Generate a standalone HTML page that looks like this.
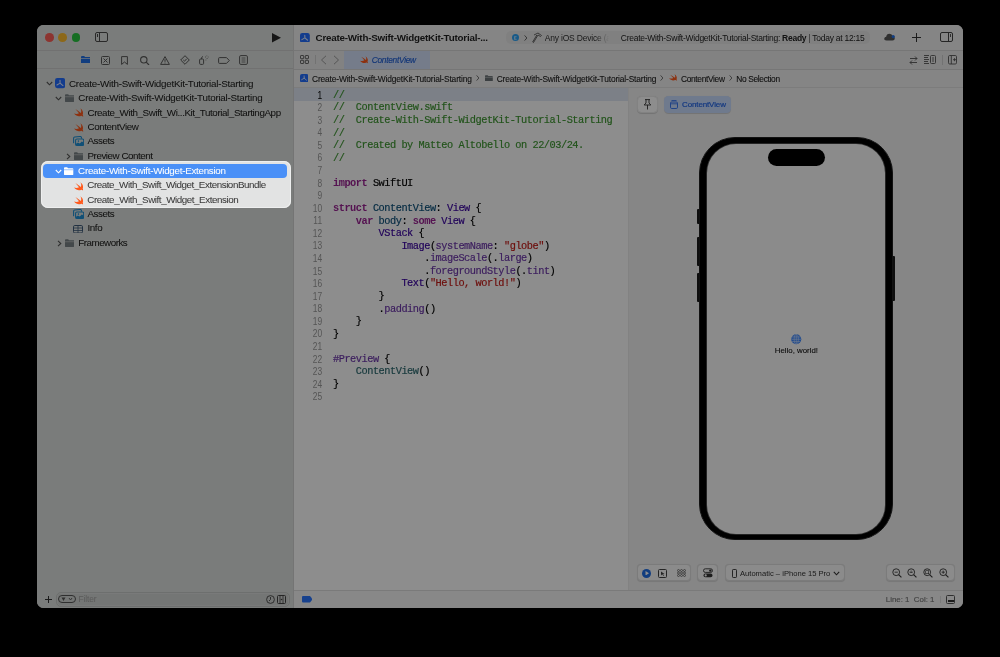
<!DOCTYPE html>
<html><head><meta charset="utf-8">
<style>
*{margin:0;padding:0;box-sizing:border-box}
html,body{width:1000px;height:657px;background:#000;overflow:hidden;font-family:"Liberation Sans",sans-serif;color:#222}
.a{position:absolute}
#win{position:absolute;left:37px;top:25px;width:926px;height:583px;border-radius:6.5px;overflow:hidden;background:#fff}
#pg{position:absolute;left:-37px;top:-25px;width:1000px;height:657px;will-change:transform}
#dim{position:absolute;left:0;top:0;width:1000px;height:657px;background:rgba(0,0,0,0.447)}
.t{position:absolute;white-space:nowrap;font-size:9px;line-height:12px}
.code{position:absolute;left:333px;font-family:"Liberation Mono",monospace;font-size:10.3px;letter-spacing:-0.48px;-webkit-text-stroke:0.18px;line-height:12.57px;white-space:pre;color:#000}
.ln{position:absolute;left:296px;width:26.1px;transform:scaleX(0.84);transform-origin:100% 50%;font-family:"Liberation Sans",sans-serif;font-size:10px;line-height:12.57px;text-align:right;color:#9a9a9a;white-space:pre}
.cm{color:#3d9630}.kw{color:#9b2393;font-weight:bold;-webkit-text-stroke:0}.ty{color:#3900a0}.st{color:#c41a16}.fn{color:#6c36a9}.cv{color:#0b4f79}.pu{color:#000}.pc{color:#2d6a70}
</style></head><body>
<div id="win"><div id="pg">

<div class="a" style="left:37px;top:25px;width:256px;height:583px;background:#dde1de"></div>
<div class="a" style="left:293px;top:25px;width:1px;height:583px;background:#d2d2d2"></div>
<div class="a" style="left:45.300000000000004px;top:33.0px;width:8.6px;height:8.6px;border-radius:50%;background:#fe5f57"></div>
<div class="a" style="left:58.400000000000006px;top:33.0px;width:8.6px;height:8.6px;border-radius:50%;background:#febc2e"></div>
<div class="a" style="left:71.5px;top:33.0px;width:8.6px;height:8.6px;border-radius:50%;background:#28c840"></div>
<div class="a" style="left:95px;top:32px;width:12.5px;height:10px;border:1.1px solid #4a4a4a;border-radius:2px"></div>
<div class="a" style="left:98.8px;top:32px;width:1.1px;height:10px;background:#4a4a4a"></div>
<div class="a" style="left:96.6px;top:34px;width:1px;height:2.5px;background:#4a4a4a"></div>
<svg class="a" style="left:272px;top:33px" width="9" height="9.5" viewBox="0 0 9 9.5"><path d="M0 0 L9 4.75 L0 9.5 Z" fill="#2a2a2a"/></svg>
<div class="a" style="left:37px;top:50px;width:256px;height:1px;background:#cdcdcd"></div>
<div class="a" style="left:37px;top:68px;width:256px;height:1px;background:#cdcdcd"></div>
<svg class="a" style="left:80.5px;top:55.5px" width="9.5" height="7.5" viewBox="0 0 9.5 7.5"><path d="M0 1 Q0 0 1 0 L3.2 0 L4 1 L8.5 1 Q9.5 1 9.5 2 L9.5 6.5 Q9.5 7.5 8.5 7.5 L1 7.5 Q0 7.5 0 6.5Z" fill="#1f6ee6"/><rect y="2" width="9.5" height="0.7" fill="#e0e1e0"/></svg>
<svg class="a" style="left:100.5px;top:55.5px" width="9" height="9" viewBox="0 0 9 9"><rect x="0.5" y="0.5" width="8" height="8" rx="1" stroke="#5a5a5a" fill="none"/><path d="M2.5 2.5 L6.5 6.5 M6.5 2.5 L2.5 6.5" stroke="#5a5a5a"/></svg>
<svg class="a" style="left:121px;top:55.5px" width="7" height="9" viewBox="0 0 7 9"><path d="M0.6 0.6 L6.4 0.6 L6.4 8.4 L3.5 6 L0.6 8.4 Z" stroke="#5a5a5a" fill="none" stroke-linejoin="round"/></svg>
<svg class="a" style="left:140px;top:55.5px" width="9.5" height="9.5" viewBox="0 0 9.5 9.5"><circle cx="3.8" cy="3.8" r="3.2" stroke="#5a5a5a" fill="none" stroke-width="1.1"/><path d="M6.2 6.2 L9 9" stroke="#5a5a5a" stroke-width="1.2"/></svg>
<svg class="a" style="left:159.5px;top:55.5px" width="10" height="9" viewBox="0 0 10 9"><path d="M5 0.6 L9.4 8.4 L0.6 8.4 Z" stroke="#5a5a5a" fill="none" stroke-linejoin="round"/><path d="M5 3.2 L5 5.8 M5 6.6 L5 7.4" stroke="#5a5a5a"/></svg>
<svg class="a" style="left:179.5px;top:55px" width="10" height="10" viewBox="0 0 10 10"><path d="M5 0.7 L9.3 5 L5 9.3 L0.7 5 Z" stroke="#5a5a5a" fill="none" stroke-linejoin="round"/><path d="M3.3 5 L4.5 6.2 L6.7 3.8" stroke="#5a5a5a" fill="none"/></svg>
<svg class="a" style="left:199px;top:55px" width="10" height="10" viewBox="0 0 10 10"><rect x="0.6" y="4" width="4" height="5.4" rx="1" stroke="#5a5a5a" fill="none"/><path d="M2.6 4 L2.6 2.5 L4 1.5" stroke="#5a5a5a" fill="none"/><path d="M6 2 L7 2 M7.5 0.8 L8.2 0.8 M7.6 3.5 L8.6 3.5 M8.8 2 L9.6 2 M6.5 5 L7.3 5" stroke="#5a5a5a" stroke-width="0.7"/></svg>
<svg class="a" style="left:217.5px;top:56.5px" width="12" height="7" viewBox="0 0 12 7"><path d="M1.5 0.6 L8.5 0.6 L11.3 3.5 L8.5 6.4 L1.5 6.4 Q0.6 6.4 0.6 5.5 L0.6 1.5 Q0.6 0.6 1.5 0.6Z" stroke="#5a5a5a" fill="none"/></svg>
<svg class="a" style="left:239px;top:55px" width="9" height="10" viewBox="0 0 9 10"><rect x="0.6" y="0.6" width="7.8" height="8.8" rx="1.2" stroke="#5a5a5a" fill="none"/><path d="M2.5 3 L6.5 3 M2.5 5 L6.5 5 M2.5 7 L6.5 7" stroke="#5a5a5a" stroke-width="0.8"/></svg>
<svg class="a" style="left:46px;top:81.4px" width="7" height="5" viewBox="0 0 7 5"><path d="M0.8 1 L3.5 3.8 L6.2 1" stroke="#555" stroke-width="1.1" fill="none"/></svg>
<svg class="a" style="left:55px;top:78.4px" width="10.2" height="10.2" viewBox="0 0 10 10"><rect x="0" y="0" width="10" height="10" rx="2.3" fill="#246dff"/><path d="M4.9 2.3 L5 5 M5 5 L1.9 6.8 M5 5 L7.8 7.4" stroke="#dce8ff" stroke-width="1.05" stroke-linecap="round" fill="none"/></svg>
<div class="t" style="left:69px;top:77.50px;font-size:9.8px;letter-spacing:-0.23px;-webkit-text-stroke:0.05px;">Create-With-Swift-WidgetKit-Tutorial-Starting</div>
<svg class="a" style="left:55px;top:95.9px" width="7" height="5" viewBox="0 0 7 5"><path d="M0.8 1 L3.5 3.8 L6.2 1" stroke="#555" stroke-width="1.1" fill="none"/></svg>
<svg class="a" style="left:64.5px;top:94.0px" width="9.3" height="8" viewBox="0 0 10 8.5" preserveAspectRatio="none"><path d="M0 1.2 Q0 0.3 0.9 0.3 L3.4 0.3 L4.3 1.3 L9.1 1.3 Q10 1.3 10 2.2 L10 7.6 Q10 8.5 9.1 8.5 L0.9 8.5 Q0 8.5 0 7.6 Z" fill="#7a8286"/><rect x="0" y="2.5" width="10" height="0.9" fill="#e0e1e0" fill-opacity="0.6"/></svg>
<div class="t" style="left:78.3px;top:92.00px;font-size:9.8px;letter-spacing:-0.23px;-webkit-text-stroke:0.05px;">Create-With-Swift-WidgetKit-Tutorial-Starting</div>
<svg class="a" style="left:74px;top:108.4px" width="9.5" height="9" preserveAspectRatio="none" viewBox="0 0 9.5 9"><path d="M0 5.6 C2.2 8.4 5.2 8.9 7.2 7.7 C8 7.9 8.6 8.2 9.2 8.8 C9.3 8 9.1 7.3 8.7 6.8 C9.6 4.6 8.9 2.1 6.4 0.2 C7.3 1.9 7.5 3.6 6.9 4.9 C5.3 3.5 3.4 2 1.4 0.9 C2.8 2.4 4 3.8 5 5.2 C3.6 6.1 1.8 6.1 0 5.6Z" fill="#fe5a1e"/></svg>
<div class="t" style="left:87.5px;top:106.50px;font-size:9.8px;letter-spacing:-0.4px;-webkit-text-stroke:0.05px;">Create_With_Swift_Wi...Kit_Tutorial_StartingApp</div>
<svg class="a" style="left:74px;top:122.9px" width="9.5" height="9" preserveAspectRatio="none" viewBox="0 0 9.5 9"><path d="M0 5.6 C2.2 8.4 5.2 8.9 7.2 7.7 C8 7.9 8.6 8.2 9.2 8.8 C9.3 8 9.1 7.3 8.7 6.8 C9.6 4.6 8.9 2.1 6.4 0.2 C7.3 1.9 7.5 3.6 6.9 4.9 C5.3 3.5 3.4 2 1.4 0.9 C2.8 2.4 4 3.8 5 5.2 C3.6 6.1 1.8 6.1 0 5.6Z" fill="#fe5a1e"/></svg>
<div class="t" style="left:87.5px;top:121.00px;font-size:9.8px;letter-spacing:-0.41px;-webkit-text-stroke:0.05px;">ContentView</div>
<svg class="a" style="left:72.8px;top:136.3px" width="11.3" height="10" viewBox="0 0 11.3 10"><path d="M0.6 7.2 L0.6 2.2 Q0.6 1.1 1.7 1 L7.2 0.5 Q8.2 0.4 8.4 1.4 L8.6 2.6" stroke="#1d8fd6" stroke-width="1.1" fill="none"/><rect x="2.6" y="3" width="8.1" height="6.4" rx="1.3" stroke="#1d8fd6" stroke-width="1.1" fill="none"/><path d="M2.6 8 L5 6.6 L6.8 7.4 L8.8 5.6 L10.7 6.6 L10.7 9.4 L2.6 9.4Z" fill="#1d8fd6"/><circle cx="5.4" cy="5.1" r="0.8" fill="#1d8fd6"/></svg>
<div class="t" style="left:87.5px;top:135.40px;font-size:9.8px;letter-spacing:-0.45px;-webkit-text-stroke:0.05px;">Assets</div>
<svg class="a" style="left:66px;top:152.8px" width="5" height="7" viewBox="0 0 5 7"><path d="M1 0.8 L3.8 3.5 L1 6.2" stroke="#555" stroke-width="1.1" fill="none"/></svg>
<svg class="a" style="left:74px;top:151.9px" width="9.3" height="8" viewBox="0 0 10 8.5" preserveAspectRatio="none"><path d="M0 1.2 Q0 0.3 0.9 0.3 L3.4 0.3 L4.3 1.3 L9.1 1.3 Q10 1.3 10 2.2 L10 7.6 Q10 8.5 9.1 8.5 L0.9 8.5 Q0 8.5 0 7.6 Z" fill="#7a8286"/><rect x="0" y="2.5" width="10" height="0.9" fill="#e0e1e0" fill-opacity="0.6"/></svg>
<div class="t" style="left:87.5px;top:149.90px;font-size:9.8px;letter-spacing:-0.45px;-webkit-text-stroke:0.05px;">Preview Content</div>
<svg class="a" style="left:72.8px;top:208.8px" width="11.3" height="10" viewBox="0 0 11.3 10"><path d="M0.6 7.2 L0.6 2.2 Q0.6 1.1 1.7 1 L7.2 0.5 Q8.2 0.4 8.4 1.4 L8.6 2.6" stroke="#1d8fd6" stroke-width="1.1" fill="none"/><rect x="2.6" y="3" width="8.1" height="6.4" rx="1.3" stroke="#1d8fd6" stroke-width="1.1" fill="none"/><path d="M2.6 8 L5 6.6 L6.8 7.4 L8.8 5.6 L10.7 6.6 L10.7 9.4 L2.6 9.4Z" fill="#1d8fd6"/><circle cx="5.4" cy="5.1" r="0.8" fill="#1d8fd6"/></svg>
<div class="t" style="left:87.5px;top:207.90px;font-size:9.8px;letter-spacing:-0.45px;-webkit-text-stroke:0.05px;">Assets</div>
<svg class="a" style="left:73.2px;top:224.60000000000002px" width="10" height="8.5" viewBox="0 0 10 8.5"><rect x="0.5" y="0.5" width="9" height="7.5" rx="1.3" stroke="#3f5a78" fill="none"/><path d="M5 0.5 L5 8 M0.5 3 L9.5 3 M0.5 5.5 L9.5 5.5" stroke="#3f5a78" stroke-width="0.8"/></svg>
<div class="t" style="left:87.5px;top:222.40px;font-size:9.8px;letter-spacing:-0.4px;-webkit-text-stroke:0.05px;">Info</div>
<svg class="a" style="left:56.5px;top:239.8px" width="5" height="7" viewBox="0 0 5 7"><path d="M1 0.8 L3.8 3.5 L1 6.2" stroke="#555" stroke-width="1.1" fill="none"/></svg>
<svg class="a" style="left:64.5px;top:238.9px" width="9.3" height="8" viewBox="0 0 10 8.5" preserveAspectRatio="none"><path d="M0 1.2 Q0 0.3 0.9 0.3 L3.4 0.3 L4.3 1.3 L9.1 1.3 Q10 1.3 10 2.2 L10 7.6 Q10 8.5 9.1 8.5 L0.9 8.5 Q0 8.5 0 7.6 Z" fill="#7a8286"/><rect x="0" y="2.5" width="10" height="0.9" fill="#e0e1e0" fill-opacity="0.6"/></svg>
<div class="t" style="left:78.3px;top:236.90px;font-size:9.8px;letter-spacing:-0.5px;-webkit-text-stroke:0.05px;">Frameworks</div>
<div class="a" style="left:44.9px;top:598.7px;width:7.1px;height:1.1px;background:#333"></div>
<div class="a" style="left:47.9px;top:595.7px;width:1.1px;height:7.1px;background:#333"></div>
<div class="a" style="left:55.5px;top:592px;width:234px;height:14.5px;border-radius:5px;background:#d2d5d3;border:1px solid #c6c9c7;box-shadow:inset 0 0 0 0.6px #e4e6e5"></div>
<div class="a" style="left:58px;top:594.5px;width:18px;height:8.5px;border-radius:4.5px;border:1.1px solid #555"></div>
<svg class="a" style="left:61px;top:596.5px" width="12" height="5" viewBox="0 0 12 5"><path d="M0.5 0.5 L4.5 0.5 L2.5 4 Z" fill="#555"/><path d="M8 1 L9.5 3 L11 1" stroke="#555" fill="none" stroke-width="0.9"/></svg>
<div class="t" style="left:78.5px;top:593.3px;color:#a3a3a3;font-size:8.4px;letter-spacing:-0.1px">Filter</div>
<svg class="a" style="left:266px;top:595px" width="9" height="9" viewBox="0 0 9 9"><circle cx="4.5" cy="4.5" r="3.9" stroke="#444" fill="none" stroke-width="0.9"/><path d="M4.5 2 L4.5 4.5 L3 6" stroke="#444" fill="none" stroke-width="0.9"/></svg>
<svg class="a" style="left:277px;top:595px" width="9" height="9" viewBox="0 0 9 9"><rect x="0.5" y="0.5" width="8" height="8" rx="1" stroke="#444" fill="none"/><path d="M3 1 L3 8 M6 1 L6 8" stroke="#444" stroke-width="0.8"/><circle cx="4.5" cy="4.5" r="0.8" fill="#444"/></svg>

<div class="a" style="left:294px;top:25px;width:669px;height:25px;background:#f1f1f1"></div>
<div class="a" style="left:294px;top:50px;width:669px;height:1px;background:#d6d6d6"></div>
<div class="a" style="left:294px;top:51px;width:669px;height:17.5px;background:#ececec"></div>
<div class="a" style="left:344px;top:51px;width:85.5px;height:17.5px;background:#d3e1f9"></div>
<div class="a" style="left:294px;top:68.5px;width:669px;height:1px;background:#d6d6d6"></div>
<div class="a" style="left:294px;top:69.5px;width:669px;height:17.5px;background:#f1f1f1"></div>
<div class="a" style="left:294px;top:87px;width:669px;height:1px;background:#e0e0e0"></div>
<div class="a" style="left:294px;top:88.3px;width:334.5px;height:12.4px;background:#e0e8f4"></div>
<div class="a" style="left:628.5px;top:88px;width:334.5px;height:502px;background:#f3f3f3"></div>
<div class="a" style="left:628px;top:88px;width:1px;height:502px;background:#ececec"></div>
<div class="a" style="left:294px;top:590px;width:669px;height:1px;background:#dcdcdc"></div>
<div class="a" style="left:294px;top:591px;width:669px;height:17px;background:#f6f6f6"></div>

<svg class="a" style="left:300.2px;top:32.5px" width="9.8" height="9.8" viewBox="0 0 10 10"><rect x="0" y="0" width="10" height="10" rx="2.3" fill="#246dff"/><path d="M4.9 2.3 L5 5 M5 5 L1.9 6.8 M5 5 L7.8 7.4" stroke="#dce8ff" stroke-width="1.05" stroke-linecap="round" fill="none"/></svg>
<div class="t" style="left:315.5px;top:31.6px;font-weight:bold;font-size:9.8px;letter-spacing:-0.2px;color:#222">Create-With-Swift-WidgetKit-Tutorial-...</div>
<div class="a" style="left:506.4px;top:30.6px;width:363.3px;height:13.6px;border-radius:5px;background:#e8e8e8"></div>
<div class="a" style="left:511.8px;top:34px;width:7.2px;height:7.2px;border-radius:50%;background:#2da3f6"></div>
<svg class="a" style="left:513.9px;top:35.6px" width="3" height="4" viewBox="0 0 3 4"><path d="M2.6 0.4 L0.5 0.4 L0.5 3.6 L2.6 3.6 M0.5 2 L2.2 2" stroke="#cfeaff" stroke-width="0.7" fill="none"/></svg>
<svg class="a" style="left:523.8px;top:34.5px" width="3.5" height="6" viewBox="0 0 3.5 6"><path d="M0.6 0.4 L2.9 3 L0.6 5.6" stroke="#444" stroke-width="0.8" fill="none"/></svg>
<svg class="a" style="left:532px;top:31.5px" width="10" height="11" viewBox="0 0 10 11"><path d="M2 3 L6 1 L9.5 3.5 L8.5 4.5 L6 3 L1.5 10.5 L0.7 10 L4.8 3" stroke="#444" fill="none" stroke-width="0.8"/></svg>
<div class="t" style="left:544.8px;top:31.65px;color:#333;width:64px;overflow:hidden;font-size:8.5px;letter-spacing:-0.2px;-webkit-mask-image:linear-gradient(90deg,#000 80%,transparent)">Any iOS Device (arm64)</div>
<div class="t" style="left:620.8px;top:31.65px;color:#222;font-size:8.5px;letter-spacing:-0.26px">Create-With-Swift-WidgetKit-Tutorial-Starting: <b>Ready</b> <span style="color:#555">|</span> Today at 12:15</div>
<svg class="a" style="left:883.5px;top:33px" width="12" height="8" viewBox="0 0 12 8"><path d="M2.5 7.5 Q0 7.5 0.3 5.3 Q0.6 3.8 2.2 3.8 Q2.6 1 5.3 0.8 Q7.6 0.8 8.6 2.8 Q10.8 3 10.8 5.2 Q10.8 7.5 8.6 7.5Z" fill="#555"/><circle cx="9" cy="3.8" r="2" fill="#fff" fill-opacity="0"/><circle cx="9.2" cy="3.6" r="1.6" fill="#1f6ee6"/></svg>
<div class="a" style="left:911.5px;top:36.8px;width:9px;height:1.1px;background:#333"></div>
<div class="a" style="left:915.5px;top:32.8px;width:1.1px;height:9px;background:#333"></div>
<div class="a" style="left:940.3px;top:32px;width:13px;height:10px;border:1.1px solid #444;border-radius:2px"></div>
<div class="a" style="left:948px;top:32px;width:1px;height:10px;background:#444"></div>
<div class="a" style="left:950.2px;top:34.3px;width:0.9px;height:2.8px;background:#555"></div>
<svg class="a" style="left:300px;top:55px" width="9" height="9" viewBox="0 0 9 9"><rect x="0.5" y="0.5" width="3.2" height="3.2" rx="0.6" stroke="#555" fill="none" stroke-width="0.9"/><rect x="5.3" y="0.5" width="3.2" height="3.2" rx="0.6" stroke="#555" fill="none" stroke-width="0.9"/><rect x="0.5" y="5.3" width="3.2" height="3.2" rx="0.6" stroke="#555" fill="none" stroke-width="0.9"/><rect x="5.3" y="5.3" width="3.2" height="3.2" rx="0.6" stroke="#555" fill="none" stroke-width="0.9"/></svg>
<div class="a" style="left:314.5px;top:55px;width:1px;height:9px;background:#cfcfcf"></div>
<svg class="a" style="left:319.5px;top:54.5px" width="7" height="10" viewBox="0 0 7 10"><path d="M6 0.8 L1.5 5 L6 9.2" stroke="#999" fill="none"/></svg>
<svg class="a" style="left:333px;top:54.5px" width="7" height="10" viewBox="0 0 7 10"><path d="M1 0.8 L5.5 5 L1 9.2" stroke="#999" fill="none"/></svg>
<svg class="a" style="left:359.8px;top:56px" width="8.2" height="7.5" preserveAspectRatio="none" viewBox="0 0 9.5 9"><path d="M0 5.6 C2.2 8.4 5.2 8.9 7.2 7.7 C8 7.9 8.6 8.2 9.2 8.8 C9.3 8 9.1 7.3 8.7 6.8 C9.6 4.6 8.9 2.1 6.4 0.2 C7.3 1.9 7.5 3.6 6.9 4.9 C5.3 3.5 3.4 2 1.4 0.9 C2.8 2.4 4 3.8 5 5.2 C3.6 6.1 1.8 6.1 0 5.6Z" fill="#fe5a1e"/></svg>
<div class="t" style="left:371.7px;top:53.7px;font-style:italic;color:#1f5ed6;font-size:8.3px;letter-spacing:-0.25px;-webkit-text-stroke:0.15px">ContentView</div>
<svg class="a" style="left:908.5px;top:55.5px" width="9" height="9" viewBox="0 0 9 9"><path d="M1 2.5 L8 2.5 M6 0.5 L8 2.5 L6 4.5 M8 6.5 L1 6.5 M3 4.5 L1 6.5 L3 8.5" stroke="#555" fill="none" stroke-width="0.9"/></svg>
<svg class="a" style="left:924px;top:55px" width="12" height="9" viewBox="0 0 12 9"><path d="M0 0.5 L5 0.5 M0 2.5 L4 2.5 M0 4.5 L5 4.5 M0 6.5 L4 6.5 M0 8.5 L5 8.5" stroke="#555" stroke-width="0.9"/><rect x="6.5" y="0.5" width="5" height="8" rx="1" stroke="#555" fill="none" stroke-width="0.9"/><path d="M9 2 L9 7" stroke="#555" stroke-width="0.9"/></svg>
<div class="a" style="left:942px;top:55px;width:1px;height:10px;background:#cfcfcf"></div>
<svg class="a" style="left:948.3px;top:55px" width="9" height="9.5" viewBox="0 0 9 9.5"><rect x="0.5" y="0.5" width="8" height="8.5" rx="1.2" stroke="#555" fill="none" stroke-width="0.9"/><path d="M3.3 0.5 L3.3 9 M5 4.7 L8 4.7 M6.5 3.2 L6.5 6.2" stroke="#555" stroke-width="0.9"/></svg>
<svg class="a" style="left:299.8px;top:74px" width="8.4" height="8.4" viewBox="0 0 10 10"><rect x="0" y="0" width="10" height="10" rx="2.3" fill="#246dff"/><path d="M4.9 2.3 L5 5 M5 5 L1.9 6.8 M5 5 L7.8 7.4" stroke="#dce8ff" stroke-width="1.05" stroke-linecap="round" fill="none"/></svg>
<div class="t" style="left:312px;top:72.5px;color:#222;font-size:8.4px;letter-spacing:-0.147px;-webkit-text-stroke:0.1px">Create-With-Swift-WidgetKit-Tutorial-Starting</div>
<svg class="a" style="left:476px;top:75.4px" width="3.5" height="6" viewBox="0 0 3.5 6"><path d="M0.6 0.4 L2.9 3 L0.6 5.6" stroke="#555" stroke-width="0.8" fill="none"/></svg>
<svg class="a" style="left:484.8px;top:74.6px" width="7.8" height="6.4" viewBox="0 0 10 8.5" preserveAspectRatio="none"><path d="M0 1.2 Q0 0.3 0.9 0.3 L3.4 0.3 L4.3 1.3 L9.1 1.3 Q10 1.3 10 2.2 L10 7.6 Q10 8.5 9.1 8.5 L0.9 8.5 Q0 8.5 0 7.6 Z" fill="#6c7376"/><rect x="0" y="2.5" width="10" height="0.9" fill="#f3f3f3" fill-opacity="0.6"/></svg>
<div class="t" style="left:496.7px;top:72.5px;color:#222;font-size:8.4px;letter-spacing:-0.147px;-webkit-text-stroke:0.1px">Create-With-Swift-WidgetKit-Tutorial-Starting</div>
<svg class="a" style="left:660px;top:75.4px" width="3.5" height="6" viewBox="0 0 3.5 6"><path d="M0.6 0.4 L2.9 3 L0.6 5.6" stroke="#555" stroke-width="0.8" fill="none"/></svg>
<svg class="a" style="left:669px;top:74.4px" width="8.2" height="7" preserveAspectRatio="none" viewBox="0 0 9.5 9"><path d="M0 5.6 C2.2 8.4 5.2 8.9 7.2 7.7 C8 7.9 8.6 8.2 9.2 8.8 C9.3 8 9.1 7.3 8.7 6.8 C9.6 4.6 8.9 2.1 6.4 0.2 C7.3 1.9 7.5 3.6 6.9 4.9 C5.3 3.5 3.4 2 1.4 0.9 C2.8 2.4 4 3.8 5 5.2 C3.6 6.1 1.8 6.1 0 5.6Z" fill="#fe5a1e"/></svg>
<div class="t" style="left:681px;top:72.5px;color:#222;font-size:8.4px;letter-spacing:-0.34px;-webkit-text-stroke:0.1px">ContentView</div>
<svg class="a" style="left:728.5px;top:75.4px" width="3.5" height="6" viewBox="0 0 3.5 6"><path d="M0.6 0.4 L2.9 3 L0.6 5.6" stroke="#555" stroke-width="0.8" fill="none"/></svg>
<div class="t" style="left:736.2px;top:72.5px;color:#222;font-size:8.4px;letter-spacing:-0.33px;-webkit-text-stroke:0.1px">No Selection</div>
<div class="ln" style="top:89.61px;color:#000">1</div>
<div class="code" style="top:88.81px"><span class="cm">//</span></div>
<div class="ln" style="top:102.18px;color:#9a9a9a">2</div>
<div class="code" style="top:101.38px"><span class="cm">//  ContentView.swift</span></div>
<div class="ln" style="top:114.75px;color:#9a9a9a">3</div>
<div class="code" style="top:113.95px"><span class="cm">//  Create-With-Swift-WidgetKit-Tutorial-Starting</span></div>
<div class="ln" style="top:127.33px;color:#9a9a9a">4</div>
<div class="code" style="top:126.53px"><span class="cm">//</span></div>
<div class="ln" style="top:139.90px;color:#9a9a9a">5</div>
<div class="code" style="top:139.09px"><span class="cm">//  Created by Matteo Altobello on 22/03/24.</span></div>
<div class="ln" style="top:152.47px;color:#9a9a9a">6</div>
<div class="code" style="top:151.66px"><span class="cm">//</span></div>
<div class="ln" style="top:165.04px;color:#9a9a9a">7</div>
<div class="code" style="top:164.24px"></div>
<div class="ln" style="top:177.61px;color:#9a9a9a">8</div>
<div class="code" style="top:176.81px"><span class="kw">import</span> SwiftUI</div>
<div class="ln" style="top:190.18px;color:#9a9a9a">9</div>
<div class="code" style="top:189.38px"></div>
<div class="ln" style="top:202.75px;color:#9a9a9a">10</div>
<div class="code" style="top:201.94px"><span class="kw">struct</span> <span class="cv">ContentView</span>: <span class="ty">View</span> {</div>
<div class="ln" style="top:215.31px;color:#9a9a9a">11</div>
<div class="code" style="top:214.51px">    <span class="kw">var</span> <span class="cv">body</span>: <span class="kw">some</span> <span class="ty">View</span> {</div>
<div class="ln" style="top:227.89px;color:#9a9a9a">12</div>
<div class="code" style="top:227.09px">        <span class="ty">VStack</span> {</div>
<div class="ln" style="top:240.46px;color:#9a9a9a">13</div>
<div class="code" style="top:239.66px">            <span class="ty">Image</span>(<span class="fn">systemName</span>: <span class="st">"globe"</span>)</div>
<div class="ln" style="top:253.03px;color:#9a9a9a">14</div>
<div class="code" style="top:252.22px">                .<span class="fn">imageScale</span>(.<span class="fn">large</span>)</div>
<div class="ln" style="top:265.60px;color:#9a9a9a">15</div>
<div class="code" style="top:264.80px">                .<span class="fn">foregroundStyle</span>(.<span class="fn">tint</span>)</div>
<div class="ln" style="top:278.17px;color:#9a9a9a">16</div>
<div class="code" style="top:277.37px">            <span class="ty">Text</span>(<span class="st">"Hello, world!"</span>)</div>
<div class="ln" style="top:290.74px;color:#9a9a9a">17</div>
<div class="code" style="top:289.94px">        }</div>
<div class="ln" style="top:303.31px;color:#9a9a9a">18</div>
<div class="code" style="top:302.50px">        .<span class="fn">padding</span>()</div>
<div class="ln" style="top:315.88px;color:#9a9a9a">19</div>
<div class="code" style="top:315.07px">    }</div>
<div class="ln" style="top:328.44px;color:#9a9a9a">20</div>
<div class="code" style="top:327.64px">}</div>
<div class="ln" style="top:341.02px;color:#9a9a9a">21</div>
<div class="code" style="top:340.22px"></div>
<div class="ln" style="top:353.59px;color:#9a9a9a">22</div>
<div class="code" style="top:352.79px"><span class="fn">#Preview</span> {</div>
<div class="ln" style="top:366.16px;color:#9a9a9a">23</div>
<div class="code" style="top:365.36px">    <span class="pc">ContentView</span>()</div>
<div class="ln" style="top:378.73px;color:#9a9a9a">24</div>
<div class="code" style="top:377.93px">}</div>
<div class="ln" style="top:391.30px;color:#9a9a9a">25</div>
<div class="code" style="top:390.50px"></div>
<div class="a" style="left:637px;top:96px;width:21px;height:17px;border-radius:4.5px;background:#fff;border:1px solid #ebebeb;box-shadow:0 0.5px 1px rgba(0,0,0,0.15)"></div>
<svg class="a" style="left:643px;top:99px" width="9" height="11" viewBox="0 0 9 11"><path d="M2 0.6 L7 0.6 M3 0.6 L3 4 L1.2 6 L7.8 6 L6 4 L6 0.6 M4.5 6 L4.5 10.5" stroke="#333" fill="none" stroke-width="0.9"/></svg>
<div class="a" style="left:664.3px;top:96px;width:67px;height:17px;border-radius:4.5px;background:#c9dcff;box-shadow:0 0.5px 1px rgba(0,0,0,0.15)"></div>
<svg class="a" style="left:670px;top:99.5px" width="8" height="9" viewBox="0 0 8 9"><rect x="0.5" y="2" width="7" height="6.5" rx="1.2" stroke="#2a6df0" fill="none" stroke-width="0.9"/><path d="M1.5 0.5 L6.5 0.5 M0.5 3.8 L7.5 3.8" stroke="#2a6df0" stroke-width="0.8"/></svg>
<div class="t" style="left:682px;top:98.8px;color:#2467e8;font-size:8px;letter-spacing:-0.13px;-webkit-text-stroke:0.2px">ContentView</div>
<div class="a" style="left:696.8px;top:209px;width:3px;height:15px;background:#1a1a1a;border-radius:1px"></div>
<div class="a" style="left:696.5px;top:237px;width:3px;height:28.5px;background:#1a1a1a;border-radius:1px"></div>
<div class="a" style="left:696.5px;top:273.4px;width:3px;height:28.5px;background:#1a1a1a;border-radius:1px"></div>
<div class="a" style="left:892px;top:256px;width:3px;height:45px;background:#1a1a1a;border-radius:1px"></div>
<div class="a" style="left:699.4px;top:136.8px;width:193.6px;height:402.8px;border-radius:36px;background:#000;border:1.5px solid #222"></div>
<div class="a" style="left:706.7px;top:144px;width:178.7px;height:389.7px;border-radius:29px;background:#fcfcfc;box-shadow:0 0 0 0.8px #555"></div>
<div class="a" style="left:767.6px;top:149px;width:57.2px;height:16.5px;border-radius:8.5px;background:#000"></div>
<svg class="a" style="left:791px;top:334px" width="10.5" height="10.5" viewBox="0 0 10 10"><circle cx="5" cy="5" r="4.8" fill="#3a86ff"/><g stroke="#cfe0ff" stroke-width="0.6" fill="none"><ellipse cx="5" cy="5" rx="2" ry="4.6"/><path d="M0.3 5 L9.7 5 M1 2.8 L9 2.8 M1 7.2 L9 7.2 M5 0.3 L5 9.7"/></g></svg>
<div class="t" style="left:774.8px;top:344.6px;color:#111;font-size:7.85px;-webkit-text-stroke:0.1px">Hello, world!</div>
<div class="a" style="left:637px;top:564.4px;width:53.60000000000002px;height:17px;border-radius:4px;background:#fbfbfb;border:1px solid #dedede;box-shadow:0 0.5px 1px rgba(0,0,0,0.12)"></div>
<div class="a" style="left:697px;top:564.4px;width:21.299999999999955px;height:17px;border-radius:4px;background:#fbfbfb;border:1px solid #dedede;box-shadow:0 0.5px 1px rgba(0,0,0,0.12)"></div>
<div class="a" style="left:724.7px;top:564.4px;width:120.69999999999993px;height:17px;border-radius:4px;background:#fbfbfb;border:1px solid #dedede;box-shadow:0 0.5px 1px rgba(0,0,0,0.12)"></div>
<div class="a" style="left:885.8px;top:564.4px;width:69.20000000000005px;height:17px;border-radius:4px;background:#fbfbfb;border:1px solid #dedede;box-shadow:0 0.5px 1px rgba(0,0,0,0.12)"></div>
<div class="a" style="left:642px;top:568.5px;width:9px;height:9px;border-radius:50%;background:#1f6ee6"></div>
<svg class="a" style="left:644.8px;top:570.8px" width="4.5" height="4.5" viewBox="0 0 4.5 4.5"><path d="M0.5 0 L4.2 2.25 L0.5 4.5Z" fill="#fff"/></svg>
<svg class="a" style="left:657.5px;top:568.5px" width="9" height="9" viewBox="0 0 9 9"><rect x="0.5" y="0.5" width="8" height="8" rx="1" stroke="#444" fill="none"/><path d="M3 2.5 L3 6.5 L4.2 5.3 L5.5 7 L6 6.6 L5 5 L6.5 5 Z" fill="#444"/></svg>
<svg class="a" style="left:676.5px;top:569px" width="9" height="8" viewBox="0 0 9 8"><g fill="none" stroke="#555" stroke-width="0.7"><circle cx="1.5" cy="1.5" r="1"/><circle cx="4.5" cy="1.5" r="1"/><circle cx="7.5" cy="1.5" r="1"/><circle cx="1.5" cy="4" r="1"/><circle cx="4.5" cy="4" r="1"/><circle cx="7.5" cy="4" r="1"/><circle cx="1.5" cy="6.5" r="1"/><circle cx="4.5" cy="6.5" r="1"/><circle cx="7.5" cy="6.5" r="1"/></g></svg>
<svg class="a" style="left:702.5px;top:568px" width="10" height="10" viewBox="0 0 10 10"><rect x="0.5" y="0.8" width="9" height="3.6" rx="1.8" stroke="#333" fill="none" stroke-width="0.9"/><circle cx="7.3" cy="2.6" r="1.2" fill="#333"/><rect x="0.5" y="5.6" width="9" height="3.6" rx="1.8" fill="#333"/><circle cx="2.7" cy="7.4" r="1.1" fill="#fff"/></svg>
<div class="a" style="left:731.5px;top:568.5px;width:5px;height:9px;border:1px solid #444;border-radius:1.2px"></div>
<div class="t" style="left:740px;top:567px;color:#333;font-size:7.6px;margin-top:1px">Automatic – iPhone 15 Pro</div>
<svg class="a" style="left:833px;top:571px" width="7" height="5" viewBox="0 0 7 5"><path d="M0.8 0.8 L3.5 3.8 L6.2 0.8" stroke="#333" stroke-width="1.1" fill="none"/></svg>
<svg class="a" style="left:891.5px;top:568px" width="10" height="10" viewBox="0 0 10 10"><circle cx="4.2" cy="4.2" r="3.4" stroke="#333" fill="none" stroke-width="0.9"/><path d="M6.6 6.6 L9.4 9.4" stroke="#333" stroke-width="1.1"/><path d="M2.6 4.2 L5.8 4.2" stroke="#333" stroke-width="0.8"/></svg>
<svg class="a" style="left:907.2px;top:568px" width="10" height="10" viewBox="0 0 10 10"><circle cx="4.2" cy="4.2" r="3.4" stroke="#333" fill="none" stroke-width="0.9"/><path d="M6.6 6.6 L9.4 9.4" stroke="#333" stroke-width="1.1"/><path d="M2.6 4.2 L5.8 4.2" stroke="#333" stroke-width="0.8"/><path d="M4.2 2.6 L4.2 5.8" stroke="#333" stroke-width="0.8" stroke-dasharray="0.8 0.8"/></svg>
<svg class="a" style="left:923px;top:568px" width="10" height="10" viewBox="0 0 10 10"><circle cx="4.2" cy="4.2" r="3.4" stroke="#333" fill="none" stroke-width="0.9"/><path d="M6.6 6.6 L9.4 9.4" stroke="#333" stroke-width="1.1"/><rect x="2.7" y="2.7" width="3" height="3" stroke="#333" fill="none" stroke-width="0.6"/></svg>
<svg class="a" style="left:939.3px;top:568px" width="10" height="10" viewBox="0 0 10 10"><circle cx="4.2" cy="4.2" r="3.4" stroke="#333" fill="none" stroke-width="0.9"/><path d="M6.6 6.6 L9.4 9.4" stroke="#333" stroke-width="1.1"/><path d="M2.6 4.2 L5.8 4.2 M4.2 2.6 L4.2 5.8" stroke="#333" stroke-width="0.8"/></svg>
<svg class="a" style="left:301.5px;top:596px" width="10.5" height="6.5" viewBox="0 0 10.5 6.5"><path d="M1 0 L8 0 L10.5 3.25 L8 6.5 L1 6.5 Q0 6.5 0 5.5 L0 1 Q0 0 1 0Z" fill="#2a76ff"/></svg>
<div class="t" style="left:885.8px;top:593.5px;color:#777;font-size:7.9px;-webkit-text-stroke:0.15px">Line: 1&nbsp; Col: 1</div>
<div class="a" style="left:940px;top:596px;width:1px;height:7px;background:#dedede"></div>
<div class="a" style="left:946px;top:595.2px;width:9px;height:8.4px;border:1px solid #555;border-radius:1.5px"></div>
<div class="a" style="left:947.5px;top:600.3px;width:6px;height:1.6px;background:#333"></div>
</div></div>
<div id="dim"></div>
<div class="a" style="left:41.2px;top:160.5px;width:249.6px;height:47.3px;border-radius:7px;background:#e2e3e3;overflow:hidden;will-change:transform;box-shadow:inset 0 0 0 1px #eeefef">
<div class="a" style="left:-41.2px;top:-160.5px;width:1000px;height:657px">
<div class="a" style="left:43.5px;top:163.5px;width:243.3px;height:14.3px;border-radius:4px;background:#4a90f7"></div>
<svg class="a" style="left:55px;top:168.7px" width="7" height="5" viewBox="0 0 7 5"><path d="M0.8 1 L3.5 3.8 L6.2 1" stroke="#fff" stroke-width="1.1" fill="none"/></svg>
<svg class="a" style="left:64.5px;top:166.7px" width="9.3" height="8" viewBox="0 0 10 8.5" preserveAspectRatio="none"><path d="M0 1.2 Q0 0.3 0.9 0.3 L3.4 0.3 L4.3 1.3 L9.1 1.3 Q10 1.3 10 2.2 L10 7.6 Q10 8.5 9.1 8.5 L0.9 8.5 Q0 8.5 0 7.6 Z" fill="#fff"/><rect x="0" y="2.5" width="10" height="0.9" fill="#4a90f7" fill-opacity="0.6"/></svg>
<div class="t" style="left:78.3px;top:164.80px;font-size:9.8px;letter-spacing:-0.27px;-webkit-text-stroke:0.05px;color:#fff">Create-With-Swift-Widget-Extension</div>
<svg class="a" style="left:74px;top:181.0px" width="9.5" height="9" preserveAspectRatio="none" viewBox="0 0 9.5 9"><path d="M0 5.6 C2.2 8.4 5.2 8.9 7.2 7.7 C8 7.9 8.6 8.2 9.2 8.8 C9.3 8 9.1 7.3 8.7 6.8 C9.6 4.6 8.9 2.1 6.4 0.2 C7.3 1.9 7.5 3.6 6.9 4.9 C5.3 3.5 3.4 2 1.4 0.9 C2.8 2.4 4 3.8 5 5.2 C3.6 6.1 1.8 6.1 0 5.6Z" fill="#fe5a1e"/></svg>
<div class="t" style="left:87.5px;top:178.90px;font-size:9.8px;letter-spacing:-0.44px;-webkit-text-stroke:0.05px;color:#3a3a3a">Create_With_Swift_Widget_ExtensionBundle</div>
<svg class="a" style="left:74px;top:195.6px" width="9.5" height="9" preserveAspectRatio="none" viewBox="0 0 9.5 9"><path d="M0 5.6 C2.2 8.4 5.2 8.9 7.2 7.7 C8 7.9 8.6 8.2 9.2 8.8 C9.3 8 9.1 7.3 8.7 6.8 C9.6 4.6 8.9 2.1 6.4 0.2 C7.3 1.9 7.5 3.6 6.9 4.9 C5.3 3.5 3.4 2 1.4 0.9 C2.8 2.4 4 3.8 5 5.2 C3.6 6.1 1.8 6.1 0 5.6Z" fill="#fe5a1e"/></svg>
<div class="t" style="left:87.5px;top:193.50px;font-size:9.8px;letter-spacing:-0.43px;-webkit-text-stroke:0.05px;color:#3a3a3a">Create_With_Swift_Widget_Extension</div>
</div></div>
</body></html>
